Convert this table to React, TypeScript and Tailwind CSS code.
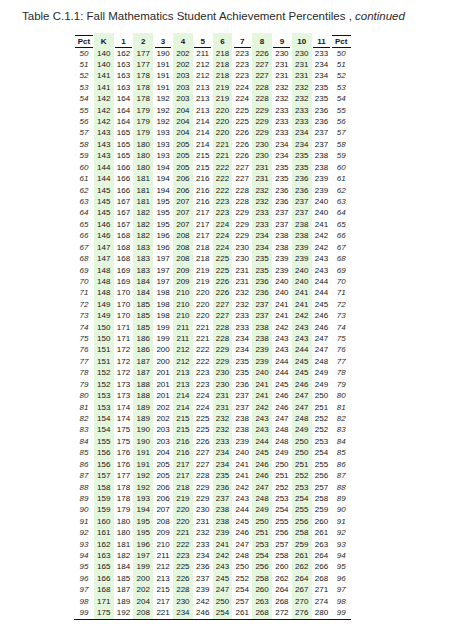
const HEADERS = ["Pct", "K", "1", "2", "3", "4", "5", "6", "7", "8", "9", "10", "11", "Pct"];

// grade columns with the light green band
const GREEN = new Set([1, 3, 5, 7, 9, 11]);

const DATA = `50 140 162 177 190 202 211 218 223 226 230 230 233
51 140 163 177 191 202 212 218 223 227 231 231 234
52 141 163 178 191 203 212 218 223 227 231 231 234
53 141 163 178 191 203 213 219 224 228 232 232 235
54 142 164 178 192 203 213 219 224 228 232 232 235
55 142 164 179 192 204 213 220 225 229 233 233 236
56 142 164 179 192 204 214 220 225 229 233 233 236
57 143 165 179 193 204 214 220 226 229 233 234 237
58 143 165 180 193 205 214 221 226 230 234 234 237
59 143 165 180 193 205 215 221 226 230 234 235 238
60 144 166 180 194 205 215 222 227 231 235 235 238
61 144 166 181 194 206 216 222 227 231 235 236 239
62 145 166 181 194 206 216 222 228 232 236 236 239
63 145 167 181 195 207 216 223 228 232 236 237 240
64 145 167 182 195 207 217 223 229 233 237 237 240
65 146 167 182 195 207 217 224 229 233 237 238 241
66 146 168 182 196 208 217 224 229 234 238 238 242
67 147 168 183 196 208 218 224 230 234 238 239 242
68 147 168 183 197 208 218 225 230 235 239 239 243
69 148 169 183 197 209 219 225 231 235 239 240 243
70 148 169 184 197 209 219 226 231 236 240 240 244
71 148 170 184 198 210 220 226 232 236 240 241 244
72 149 170 185 198 210 220 227 232 237 241 241 245
73 149 170 185 198 210 220 227 233 237 241 242 246
74 150 171 185 199 211 221 228 233 238 242 243 246
75 150 171 186 199 211 221 228 234 238 243 243 247
76 151 172 186 200 212 222 229 234 239 243 244 247
77 151 172 187 200 212 222 229 235 239 244 245 248
78 152 172 187 201 213 223 230 235 240 244 245 249
79 152 173 188 201 213 223 230 236 241 245 246 249
80 153 173 188 201 214 224 231 237 241 246 247 250
81 153 174 189 202 214 224 231 237 242 246 247 251
82 154 174 189 202 215 225 232 238 243 247 248 252
83 154 175 190 203 215 225 232 238 243 248 249 252
84 155 175 190 203 216 226 233 239 244 248 250 253
85 156 176 191 204 216 227 234 240 245 249 250 254
86 156 176 191 205 217 227 234 241 246 250 251 255
87 157 177 192 205 217 228 235 241 246 251 252 256
88 158 178 192 206 218 229 236 242 247 252 253 257
89 159 178 193 206 219 229 237 243 248 253 254 258
90 159 179 194 207 220 230 238 244 249 254 255 259
91 160 180 195 208 220 231 238 245 250 255 256 260
92 161 180 195 209 221 232 239 246 251 256 258 261
93 162 181 196 210 222 233 241 247 253 257 259 263
94 163 182 197 211 223 234 242 248 254 258 261 264
95 165 184 199 212 225 236 243 250 256 260 262 266
96 166 185 200 213 226 237 245 252 258 262 264 268
97 168 187 202 215 228 239 247 254 260 264 267 271
98 171 189 204 217 230 242 250 257 263 268 270 274
99 175 192 208 221 234 246 254 261 268 272 276 280`
  .split("\n")
  .map((line) => line.split(" "));

function HeaderRow() {
  return (
    <div className="grid grid-cols-[repeat(14,19.8px)] h-[14.5px]">
      {HEADERS.map((h, i) => {
        const isPct = i === 0 || i === HEADERS.length - 1;
        const green = GREEN.has(i);
        return (
          <div key={i} className={green ? "bg-[#e4f6de] pt-[1px]" : "pt-[1px]"}>
            <div
              className={
                isPct
                  ? "mx-[0.5px] mt-[1px] h-[12.5px] border-t border-b-[1.5px] border-[#111] text-center font-bold leading-[11px]"
                  : green
                    ? "mx-[0.5px] mt-[1px] h-[12.5px] text-center font-bold leading-[13px]"
                    : "mx-[1.5px] mt-[1px] h-[12.5px] border-b border-[#111] text-center font-bold leading-[13px]"
              }
            >
              {h}
            </div>
          </div>
        );
      })}
    </div>
  );
}

function DataRow({ cells }: { cells: string[] }) {
  const row = [...cells, cells[0]];
  return (
    <div className="grid grid-cols-[repeat(14,19.8px)] h-[11.43px]">
      {row.map((v, i) => {
        const isPct = i === 0 || i === row.length - 1;
        return (
          <div
            key={i}
            className={`text-center leading-[11.43px] ${GREEN.has(i) ? "bg-[#e4f6de]" : ""} ${isPct ? "italic text-[#2a2a2a]" : ""}`}
          >
            {v}
          </div>
        );
      })}
    </div>
  );
}

export default function App() {
  return (
    <div className="w-[474px] h-[638px] bg-white text-[#1a1a1a] font-['Liberation_Sans',Arial,sans-serif] overflow-hidden">
      <div className="pl-[22px] pt-[9px] h-[33px] text-[11.5px] leading-[15px] text-[#2a2a2a]">
        Table C.1.1: Fall Mathematics Student Achievement Percentiles , <span className="italic">continued</span>
      </div>
      <div className="ml-[74px] w-[277.2px] text-[8px] text-[#151515] border-b-[1.5px] border-[#111]">
        <HeaderRow />
        {DATA.map((cells) => (
          <DataRow key={cells[0]} cells={cells} />
        ))}
      </div>
    </div>
  );
}
